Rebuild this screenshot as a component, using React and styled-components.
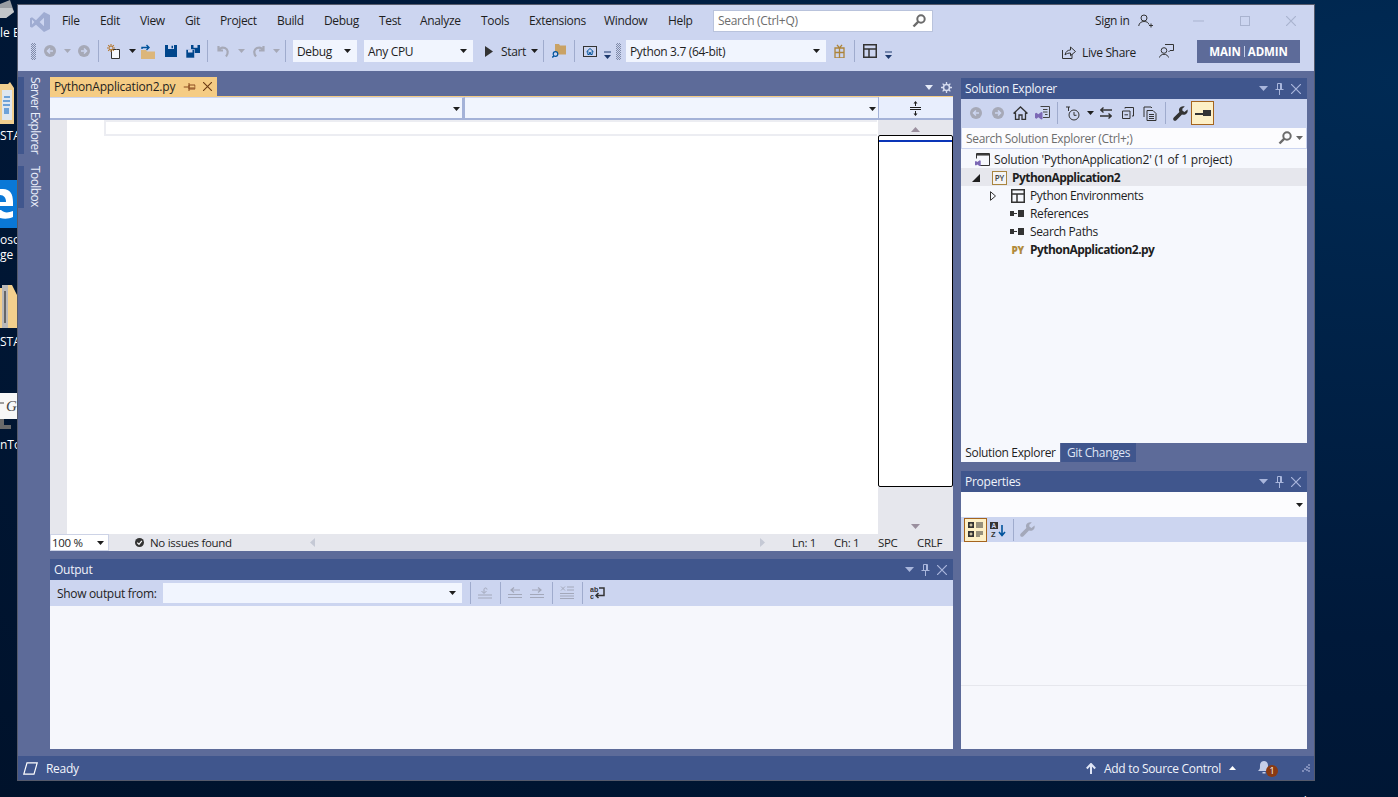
import styled, { createGlobalStyle } from "styled-components";

const GlobalStyle = createGlobalStyle`
  html, body {
    margin: 0;
    height: 100%;
    overflow: hidden;
  }
  body {
    font-family: "Open Sans", "Liberation Sans", sans-serif;
    font-size: 12px;
    color: #1e1e1e;
  }
  * {
    box-sizing: border-box;
  }
  svg {
    display: block;
    flex: none;
  }
`;

const Desktop = styled.div`
  position: relative;
  width: 1398px;
  height: 797px;
  overflow: hidden;
  background: radial-gradient(ellipse at 100% 10%, #002a54 0%, #00193a 55%, #00122b 100%);
`;

const IconStrip = styled.div`
  position: absolute;
  left: 0;
  top: 0;
  width: 17px;
  height: 460px;
  overflow: hidden;
`;

const DesktopLabel = styled.div`
  position: absolute;
  left: 0;
  top: ${(p) => p.$top}px;
  color: #fff;
  font-size: 12px;
  line-height: 14px;
  white-space: nowrap;
`;

const DesktopArt = styled.div`
  position: absolute;
  left: 0;
  top: ${(p) => p.$top}px;
`;

const Watermark = styled.div`
  position: absolute;
  left: 1278px;
  top: 793px;
  color: #fff;
  font-size: 12px;
  white-space: nowrap;
`;

const Window = styled.div`
  position: absolute;
  left: 17px;
  top: 4px;
  width: 1298px;
  height: 777px;
  border: 1px solid #555a6b;
  background: #5d6b99;
  display: flex;
  flex-direction: column;
`;

const Chrome = styled.header`
  height: 66px;
  background: #ccd5f0;
  flex: none;
`;

const MenuRow = styled.div`
  height: 33px;
  display: flex;
  align-items: center;
  padding: 0 0 2px 12px;
`;

const LogoSlot = styled.div`
  width: 32px;
  flex: none;
  padding-top: 2px;
`;

const MenuItem = styled.div`
  width: ${(p) => p.$w}px;
  flex: none;
  color: #1e1e1e;
  letter-spacing: -0.35px;
`;

const SearchBox = styled.div`
  width: 220px;
  height: 22px;
  flex: none;
  background: #fff;
  border: 1px solid #b9c3dc;
  display: flex;
  align-items: center;
  justify-content: space-between;
  padding: 0 6px 0 4px;
  color: #6d6d6d;
  letter-spacing: -0.3px;
`;

const SignIn = styled.div`
  margin-left: 162px;
  width: 80px;
  flex: none;
  display: flex;
  align-items: center;
  gap: 8px;
  letter-spacing: -0.35px;
`;

const WindowButton = styled.div`
  width: 46.5px;
  flex: none;
  display: flex;
  justify-content: center;
`;

const ToolRow = styled.div`
  height: 26px;
  display: flex;
  align-items: center;
  padding: 0 14px 0 11px;
`;

const Slot = styled.div`
  width: ${(p) => p.$w}px;
  height: 22px;
  flex: none;
  display: flex;
  align-items: center;
  justify-content: center;
`;

const Gripper = styled.div`
  width: 5px;
  height: 17px;
  background-image: conic-gradient(#7f8aa8 25%, transparent 0 50%, #7f8aa8 0 75%, transparent 0);
  background-size: 2px 2px;
`;

const Sep = styled.div`
  width: 1px;
  height: ${(p) => p.$h || 22}px;
  background: #9fabcd;
`;

const Combo = styled.div`
  width: ${(p) => p.$w}px;
  height: ${(p) => p.$h || 22}px;
  flex: none;
  background: ${(p) => p.$bg || "#f1f5fe"};
  margin-left: ${(p) => p.$ml || 0}px;
  display: flex;
  align-items: center;
  justify-content: space-between;
  padding: 0 6px 0 4px;
  letter-spacing: -0.35px;
`;

const StartButton = styled.div`
  width: 67px;
  flex: none;
  display: flex;
  align-items: center;
  padding-left: 12px;
  letter-spacing: -0.35px;
`;

const StartLabel = styled.span`
  margin: 0 5px 0 8px;
`;

const LiveShare = styled.div`
  margin-left: auto;
  flex: none;
  display: flex;
  align-items: center;
  gap: 6px;
  width: 97px;
  padding-top: 2px;
  letter-spacing: -0.35px;
`;

const Badge = styled.div`
  width: 103px;
  height: 23px;
  flex: none;
  margin-left: 23px;
  background: #5d6b99;
  color: #fff;
  font-weight: 700;
  font-size: 11.5px;
  display: flex;
  align-items: center;
  justify-content: center;
  gap: 3px;
  letter-spacing: -0.1px;
`;

const BadgeBar = styled.span`
  width: 1px;
  height: 11px;
  background: #c6cfe8;
`;

const Workspace = styled.main`
  flex: 1;
  min-height: 0;
  display: flex;
  padding: 0 7px 7px 0;
`;

const Rail = styled.nav`
  width: 32px;
  flex: none;
  padding-top: 6px;
  display: flex;
  flex-direction: column;
  align-items: flex-start;
  gap: 12px;
`;

const RailTab = styled.div`
  height: ${(p) => p.$h}px;
  border-left: 6px solid #40568d;
  padding-left: 4px;
  writing-mode: vertical-rl;
  color: #e9edf9;
  line-height: 14px;
  letter-spacing: -0.6px;
  white-space: nowrap;
`;

const CenterColumn = styled.div`
  width: 903px;
  flex: none;
  display: flex;
  flex-direction: column;
  padding-top: 6px;
  gap: 8px;
`;

const DocWell = styled.section`
  height: 474px;
  flex: none;
  display: flex;
  flex-direction: column;
`;

const TabRow = styled.div`
  height: 19px;
  flex: none;
  display: flex;
  align-items: center;
  justify-content: space-between;
  padding-right: 1px;
`;

const DocTab = styled.div`
  width: 167px;
  height: 19px;
  background: #f5cc84;
  display: flex;
  align-items: center;
  padding: 0 4px;
  letter-spacing: -0.2px;
  white-space: nowrap;
`;

const TabName = styled.span`
  width: 131px;
  flex: none;
`;

const TabActions = styled.div`
  display: flex;
  align-items: center;
  gap: 8px;
  padding-top: 1px;
`;

const NavBar = styled.div`
  height: 24px;
  flex: none;
  display: flex;
  border-top: 1px solid #f5cc84;
  border-bottom: 2px solid #a4b2d8;
  background: #f1f5fe;
`;

const NavCombo = styled.div`
  width: ${(p) => p.$w}px;
  flex: none;
  display: flex;
  align-items: center;
  justify-content: flex-end;
  padding: 2px 2px 0 0;
  border-top: 1px solid #ccd5f0;
  border-right: ${(p) => (p.$split ? "3px solid #a4b2d8" : "none")};
`;

const NavSplit = styled.div`
  flex: 1;
  background: #e8eefd;
  border-left: 1px solid #a4b2d8;
  display: flex;
  align-items: center;
  justify-content: center;
  padding: 1px 1px 0 0;
`;

const EditorRow = styled.div`
  flex: 1;
  min-height: 0;
  display: flex;
`;

const Gutter = styled.div`
  width: 17px;
  flex: none;
  background: #e6e7ed;
`;

const Margin = styled.div`
  width: 37px;
  flex: none;
  background: #fff;
`;

const CodeArea = styled.div`
  width: 774px;
  flex: none;
  background: #fff;
`;

const CurrentLine = styled.div`
  height: 16px;
  margin-right: 1px;
  border: 2px solid #ecedf2;
  border-right: none;
`;

const ScrollColumn = styled.div`
  flex: 1;
  background: #e6e7ed;
  display: flex;
  flex-direction: column;
  align-items: center;
  padding-top: 4px;
`;

const ScrollArrow = styled.div`
  height: 10px;
  flex: none;
  display: flex;
  align-items: center;
`;

const MapView = styled.div`
  width: 75px;
  height: 352px;
  flex: none;
  margin: 1px 0 34px;
  background: #fff;
  border: 1px solid #000;
  border-radius: 2px;
  padding-top: 4px;
`;

const MapCaret = styled.div`
  height: 2px;
  background: #0a35b8;
`;

const EditorFoot = styled.div`
  height: 17px;
  flex: none;
  background: #e6e7ed;
  display: flex;
  align-items: center;
  letter-spacing: -0.3px;
  font-size: 11.5px;
`;

const ZoomCombo = styled.div`
  width: 59px;
  height: 17px;
  flex: none;
  background: #fff;
  border: 1px solid #cdd3e6;
  display: flex;
  align-items: center;
  justify-content: space-between;
  padding: 0 4px 0 1px;
`;

const FootCell = styled.div`
  width: ${(p) => p.$w}px;
  flex: none;
  display: flex;
  align-items: center;
  gap: ${(p) => p.$gap || 0}px;
  padding-left: ${(p) => p.$pl || 0}px;
`;

const Panel = styled.section`
  display: flex;
  flex-direction: column;
  background: #f6f7fc;
  flex: ${(p) => (p.$h ? "none" : "1")};
  height: ${(p) => (p.$h ? `${p.$h}px` : "auto")};
  min-height: 0;
`;

const PanelTitle = styled.div`
  height: 21px;
  flex: none;
  background: #40568d;
  color: #fff;
  display: flex;
  align-items: center;
  justify-content: space-between;
  padding: 0 6px 0 4px;
  letter-spacing: -0.25px;
`;

const TitleName = styled.span`
  color: #f0f3fb;
`;

const PanelActions = styled.div`
  display: flex;
  align-items: center;
  gap: 7px;
`;

const PanelBar = styled.div`
  height: ${(p) => p.$h || 26}px;
  flex: none;
  background: #ccd5f0;
  display: flex;
  align-items: center;
  padding-left: ${(p) => p.$pl || 0}px;
`;

const OutputLabel = styled.span`
  width: 106px;
  flex: none;
  letter-spacing: -0.32px;
`;

const PanelBody = styled.div`
  flex: 1;
  min-height: 0;
  background: #f6f7fc;
`;

const RightColumn = styled.aside`
  width: 346px;
  margin-left: 8px;
  flex: none;
  display: flex;
  flex-direction: column;
  padding-top: 7px;
  gap: 9px;
`;

const ActiveButton = styled.div`
  width: ${(p) => p.$w || 23}px;
  height: 24px;
  flex: none;
  background: #fdf0c7;
  border: 1px solid #a5641e;
  display: flex;
  align-items: center;
  justify-content: center;
`;

const SearchRow = styled.div`
  height: 22px;
  flex: none;
  background: #ccd5f0;
  padding: 1px;
`;

const SearchInput = styled.div`
  height: 20px;
  background: #fcfcfe;
  display: flex;
  align-items: center;
  justify-content: space-between;
  padding: 0 3px 0 4px;
  color: #6d6d6d;
  letter-spacing: -0.33px;
`;

const SearchTools = styled.div`
  display: flex;
  align-items: center;
  gap: 4px;
`;

const Tree = styled.div`
  flex: 1;
  min-height: 0;
  background: #f6f8fd;
  padding-top: 1px;
`;

const TreeRow = styled.div`
  height: 18px;
  padding-top: 1px;
  display: flex;
  align-items: center;
  background: ${(p) => (p.$selected ? "#e6e7ed" : "transparent")};
  font-weight: ${(p) => (p.$bold ? 700 : 400)};
  letter-spacing: ${(p) => p.$track || (p.$bold ? "-0.55px" : "-0.37px")};
`;

const TreeIndent = styled.div`
  width: ${(p) => p.$w}px;
  flex: none;
  display: flex;
  align-items: center;
  justify-content: ${(p) => (p.$pr !== undefined ? "flex-end" : "center")};
  padding-right: ${(p) => p.$pr || 0}px;
`;

const PyBox = styled.span`
  width: 15px;
  height: 14px;
  border: 1px solid #a9853f;
  background: #f4f4f4;
  color: #444;
  font-size: 8px;
  font-weight: 600;
  line-height: 12px;
  text-align: center;
  letter-spacing: -0.2px;
`;

const PyMark = styled.span`
  color: #b18b3c;
  font-size: 10px;
  font-weight: 800;
  letter-spacing: -0.2px;
`;

const TabStrip = styled.div`
  height: 19px;
  flex: none;
  display: flex;
  background: #5d6b99;
`;

const BottomTab = styled.div`
  width: ${(p) => p.$w}px;
  margin-right: ${(p) => p.$mr || 0}px;
  flex: none;
  background: ${(p) => (p.$active ? "#f6f8fd" : "#40568d")};
  color: ${(p) => (p.$active ? "#1e1e1e" : "#dfe5f5")};
  display: flex;
  align-items: center;
  justify-content: center;
  letter-spacing: -0.35px;
  white-space: nowrap;
`;

const PropsSelect = styled.div`
  height: 25px;
  flex: none;
  background: #fcfcfe;
  display: flex;
  align-items: center;
  justify-content: flex-end;
  padding-right: 4px;
`;

const PropsGrid = styled.div`
  height: 144px;
  flex: none;
  border-bottom: 1px solid #e6e7ed;
`;

const StatusBar = styled.footer`
  height: 24px;
  flex: none;
  background: #40568d;
  color: #f2f4fb;
  display: flex;
  align-items: center;
  padding: 0 4px 0 5px;
  letter-spacing: -0.3px;
`;

const StatusText = styled.span`
  margin-left: 8px;
`;

const StatusRight = styled.div`
  margin-left: auto;
  display: flex;
  align-items: center;
`;

const SourceControl = styled.div`
  display: flex;
  align-items: center;
  width: 172px;
  gap: 8px;
`;

const Bell = styled.div`
  position: relative;
  width: 44px;
  height: 20px;
  padding-top: 2px;
`;

const BellCount = styled.span`
  position: absolute;
  left: 8px;
  top: 7px;
  width: 12px;
  height: 12px;
  border-radius: 50%;
  background: #8a3a12;
  color: #fff;
  font-size: 9px;
  line-height: 12px;
  text-align: center;
`;

const SvgText = styled.text`
  font-family: "Liberation Sans", sans-serif;
  font-weight: 700;
`;

const ThinSvgText = styled.text`
  font-family: "Liberation Serif", serif;
  font-style: italic;
`;

// icons
const Caret = ({ up, c = "#1e1e1e", w = 7 }) => (
  <svg width={w} height={Math.round((w * 4) / 7)} viewBox="0 0 7 4" preserveAspectRatio="none">
    <path d={up ? "M0 4L3.5 0L7 4z" : "M0 0L7 0L3.5 4z"} fill={c} />
  </svg>
);

const OverflowCaret = () => (
  <svg width={7} height={8} viewBox="0 0 7 8" style={{ marginTop: 8 }}>
    <path d="M0 1h7" stroke="#1e3a6e" strokeWidth="1" />
    <path d="M0 4h7L3.5 8z" fill="#1e3a6e" />
  </svg>
);

const VsLogo = () => (
  <svg width={20} height={20} viewBox="0 0 20 20">
    <path
      d="M14 0l6 3v14l-6 3-8-7.3-4 3-2-1V6.3l2-1 4 3zM14 5.8L9.6 10 14 14.200zM2 7.600v4.800L4.400 10z"
      fill="#9facd2"
      fillRule="evenodd"
    />
  </svg>
);

const Magnifier = ({ c = "#6b6b6b" }) => (
  <svg width={14} height={14} viewBox="0 0 14 14">
    <circle cx="9" cy="5" r="3.700" fill="none" stroke={c} strokeWidth="2" />
    <path d="M6.300 7.700L1.500 12.500" stroke={c} strokeWidth="2.400" />
  </svg>
);

const PersonPlus = () => (
  <svg width={15} height={14} viewBox="0 0 15 14">
    <circle cx="6" cy="4" r="3" fill="none" stroke="#333" />
    <path d="M0.700 12c.4-3 2.500-4.500 5.300-4.500s4.300 1 5 3M11 11.500h4M13 9.500v4" fill="none" stroke="#333" />
  </svg>
);

const MinIcon = () => (
  <svg width={11} height={2} viewBox="0 0 11 2">
    <path d="M0 1h11" stroke="#a9b3cf" />
  </svg>
);

const MaxIcon = () => (
  <svg width={10} height={10} viewBox="0 0 10 10">
    <rect x=".5" y=".5" width="9" height="9" fill="none" stroke="#a9b3cf" />
  </svg>
);

const CloseIcon = ({ c = "#a9b3cf", s = 10 }) => (
  <svg width={s} height={s} viewBox="0 0 10 10">
    <path d="M0 0l10 10M10 0L0 10" stroke={c} strokeWidth="1.200" />
  </svg>
);

const CircleArrow = ({ dir }) => (
  <svg width={12} height={12} viewBox="0 0 12 12">
    <circle cx="6" cy="6" r="6" fill="#a6a9b7" />
    <path
      d={dir === "back" ? "M9 6H4M6 3.500L3.500 6 6 8.500" : "M3 6h5M6 3.500L8.500 6 6 8.500"}
      fill="none"
      stroke="#ccd5f0"
      strokeWidth="1.500"
    />
  </svg>
);

const NewProject = () => (
  <svg width={14} height={15} viewBox="0 0 14 15">
    <path d="M4.500 5.500h5l3 0v9h-8z" fill="#f6f7fc" stroke="#333" />
    <path d="M4 0v8M0 4h8M1.200 1.200l5.600 5.600M6.800 1.200L1.200 6.800" stroke="#b5762a" strokeWidth="1.100" />
    <circle cx="4" cy="4" r="1.300" fill="#ccd5f0" />
  </svg>
);

const OpenFolder = () => (
  <svg width={14} height={15} viewBox="0 0 14 15">
    <path d="M0 6h5l1 1.500h8V15H0z" fill="#dcb67a" />
    <path d="M1 5V3.500h6M5.500 1l2.500 2.500-2.500 2.500" fill="none" stroke="#00539c" strokeWidth="1.400" />
  </svg>
);

const Floppy = ({ s = 12 }) => (
  <svg width={s} height={s} viewBox="0 0 12 12">
    <path d="M0 0h12v12H0z" fill="#00468c" />
    <path d="M3 0h6v4H3z" fill="#ccd5f0" />
    <path d="M6.500 .8h1.500v2.400H6.500z" fill="#00468c" />
  </svg>
);

const SaveAll = () => (
  <svg width={14} height={13} viewBox="0 0 14 13">
    <path d="M5 0h9v8H5z" fill="#00468c" />
    <path d="M7.500 0h4v2.800h-4z" fill="#ccd5f0" />
    <path d="M0 4.500h8.500v8.500H0z" fill="#00468c" stroke="#ccd5f0" strokeWidth=".6" />
    <path d="M2 4.500h4.500v3H2z" fill="#ccd5f0" />
  </svg>
);

const UndoIcon = ({ flip }) => (
  <svg width={13} height={13} viewBox="0 0 13 13" style={flip ? { transform: "scaleX(-1)" } : undefined}>
    <path d="M1.500 1v4.500H6M1.500 5.500C3 3 5.500 2 8 3c3 1.300 3.800 5 1 8.500" fill="none" stroke="#a6a9b7" strokeWidth="2.200" />
  </svg>
);

const FindFiles = () => (
  <svg width={14} height={14} viewBox="0 0 14 14">
    <path d="M3 0h4l1 1.500h6v9H3z" fill="#c9a265" />
    <circle cx="3.500" cy="10" r="2.300" fill="#ccd5f0" stroke="#00539c" strokeWidth="1.200" />
    <path d="M2 11.700L.3 13.500" stroke="#00539c" strokeWidth="1.400" />
  </svg>
);

const HomeBox = () => (
  <svg width={14} height={11} viewBox="0 0 14 11">
    <rect x=".5" y=".5" width="13" height="10" fill="none" stroke="#333" />
    <path d="M3.500 5.800L7 2.500l3.500 3.300M4.800 5v3.500h1.600V6.500h1.200v2h1.600V5" fill="none" stroke="#00539c" />
  </svg>
);

const Gift = () => (
  <svg width={11} height={14} viewBox="0 0 11 14">
    <path d="M1 4h9v10H1zM1 8.500h9M5.500 4v10M3 .8L5.500 4 8 .8" fill="none" stroke="#ad843a" strokeWidth="1.300" />
  </svg>
);

const LayoutIcon = ({ c = "#333" }) => (
  <svg width={14} height={14} viewBox="0 0 14 14">
    <path d="M.75.75h12.500v12.500H.75zM.75 5h12.500M6 5v8.250" fill="none" stroke={c} strokeWidth="1.500" />
  </svg>
);

const PlayIcon = () => (
  <svg width={8} height={11} viewBox="0 0 8 11">
    <path d="M0 0l8 5.500L0 11z" fill="#333" />
  </svg>
);

const ShareIcon = () => (
  <svg width={14} height={14} viewBox="0 0 14 14">
    <path d="M.5 5v8.500H10V9" fill="none" stroke="#333" />
    <path d="M3 10c.5-3.500 3-5 5.500-5V2l5 4.500-5 4.200V8C6.500 8 4.500 8.500 3 10z" fill="none" stroke="#333" />
  </svg>
);

const FeedbackIcon = () => (
  <svg width={15} height={14} viewBox="0 0 15 14">
    <circle cx="5" cy="6.500" r="2.800" fill="none" stroke="#333" />
    <path d="M.5 13.500c.4-2 2.200-3.200 4.500-3.200s4 1.200 4.500 3.200M6 .5h8.500v6H11l-1.500 1.500" fill="none" stroke="#333" />
  </svg>
);

const PinIcon = ({ c = "#a9b6dc", side }) => (
  <svg width={9} height={12} viewBox="0 0 9 12" style={side ? { transform: "rotate(90deg)" } : undefined}>
    <path d="M2.500.5h4v6h-4zM.5 6.500h8M4.500 7v5M5.500 1v5" fill="none" stroke={c} />
  </svg>
);

const Gear = () => (
  <svg width={11} height={11} viewBox="0 0 11 11">
    <circle cx="5.500" cy="5.500" r="3" fill="none" stroke="#d6dcf0" strokeWidth="1.600" />
    <path d="M5.500 0v2M5.500 9v2M0 5.500h2M9 5.500h2M1.600 1.600l1.400 1.400M8 8l1.400 1.400M9.400 1.600L8 3M3 8L1.600 9.400" stroke="#d6dcf0" strokeWidth="1.300" />
  </svg>
);

const SplitIcon = () => (
  <svg width={11} height={15} viewBox="0 0 11 15">
    <path d="M0 6.500h11M0 8.500h11" stroke="#1e1e1e" />
    <path d="M5.500 0L3.500 2.500h1.500V5h1V2.500h1.500zM5.500 15l-2-2.500h1.500V10h1v2.500h1.500z" fill="#1e1e1e" />
  </svg>
);

const CheckDot = () => (
  <svg width={9} height={9} viewBox="0 0 9 9">
    <circle cx="4.500" cy="4.500" r="4.500" fill="#333" />
    <path d="M2.200 4.600L4 6.300l2.800-3.400" fill="none" stroke="#fff" strokeWidth="1.200" />
  </svg>
);

const SideArrow = ({ right }) => (
  <svg width={5} height={9} viewBox="0 0 5 9">
    <path d={right ? "M0 0l5 4.500L0 9z" : "M5 0L0 4.500 5 9z"} fill="#c5c9d5" />
  </svg>
);

const VsDoc = () => (
  <svg width={15} height={14} viewBox="0 0 15 14">
    <path d="M5.500 .5h9v11H8M8 3.500h4.500M8 6h4.500M10 8.500h2.500" fill="none" stroke="#444" />
    <path d="M0 7.500l1.500-.7 1.800 1.400 3-2.200 1.200.6v6.300l-1.200.6-3-2.200-1.800 1.400-1.500-.7z" fill="#7b68b5" />
  </svg>
);

const HomeIcon = () => (
  <svg width={15} height={14} viewBox="0 0 15 14">
    <path d="M.5 7.500L7.500 1l7 6.500M2.500 6.500v7h3.500V9h3v4.500h3.500v-7" fill="none" stroke="#333" strokeWidth="1.300" />
  </svg>
);

const HistoryIcon = () => (
  <svg width={14} height={15} viewBox="0 0 14 15">
    <circle cx="8" cy="9" r="5" fill="none" stroke="#333" />
    <path d="M8 6v3.300h2.500M0 1h4M2.500 1v4" fill="none" stroke="#333" />
  </svg>
);

const SyncIcon = () => (
  <svg width={12} height={12} viewBox="0 0 12 12">
    <path d="M3.500 .5L.8 3l2.700 2.500M1 3h11M8.500 6.500L11.200 9 8.500 11.500M11 9H0" fill="none" stroke="#333" strokeWidth="1.400" />
  </svg>
);

const CollapseIcon = () => (
  <svg width={12} height={12} viewBox="0 0 12 12">
    <path d="M.5 4h7.500v7.500H.5zM3 1.500V.5h8.500V9h-1.500M2.500 7.800h3.500" fill="none" stroke="#333" />
  </svg>
);

const CopyDocs = () => (
  <svg width={14} height={15} viewBox="0 0 14 15">
    <path d="M1 11V1h7l1 1M4 4.500h6l3 3v7H4zM6 8.500h5M6 10.500h5M6 12.500h5" fill="none" stroke="#333" />
  </svg>
);

const Wrench = ({ c = "#333" }) => (
  <svg width={15} height={15} viewBox="0 0 15 15">
    <path d="M14.500 3.500L11.500 6 9.500 4.800 9.300 2.800 11.800.4C9.500-.3 7 .5 6.200 2.700c-.4 1.100-.3 2.200.2 3.200L.8 11.600c-.9.900-.8 2.100 0 2.800.8.700 1.800.6 2.600-.2l5.600-5.700c1 .4 2.200.5 3.300 0 1.900-.8 2.800-2.800 2.200-5z" fill={c} />
  </svg>
);

const AutoHide = () => (
  <svg width={16} height={6} viewBox="0 0 16 6">
    <path d="M0 3h8v2H0z" fill="#333" />
    <path d="M8 0h8v6H8z" fill="#333" />
  </svg>
);

const TreeOpen = () => (
  <svg width={8} height={8} viewBox="0 0 8 8">
    <path d="M8 0v8H0z" fill="#1e1e1e" />
  </svg>
);

const TreeClosed = () => (
  <svg width={6} height={10} viewBox="0 0 6 10">
    <path d="M.5.7l5 4.300-5 4.300z" fill="none" stroke="#333" />
  </svg>
);

const SolutionIcon = () => (
  <svg width={15} height={13} viewBox="0 0 15 13">
    <path d="M5 12.500h9.500V.5H1.500v5" fill="none" stroke="#333" />
    <path d="M1.500 1.800h13" stroke="#333" strokeWidth="1.500" />
    <path d="M0 8.500l1-.5 1.300 1 2.400-1.800 1 .5v5l-1 .5-2.400-1.800-1.300 1-1-.5z" fill="#7b68b5" />
  </svg>
);

const RefIcon = () => (
  <svg width={14} height={7} viewBox="0 0 14 7">
    <path d="M0 1h4v5H0z" fill="#333" />
    <path d="M8 0h6v7H8z" fill="#333" />
    <path d="M4 3.500h3" stroke="#333" />
  </svg>
);

const CategoryIcon = () => (
  <svg width={15} height={15} viewBox="0 0 15 15">
    <path d="M0 0h6v6H0zM0 9h6v6H0z" fill="#333" />
    <path d="M1.500 3h3M3 1.500v3M1.500 12h3M3 10.500v3" stroke="#fdf0c7" />
    <path d="M8 1h7M8 3h7M8 5h7M8 10h7M8 12h7M8 14h4" stroke="#333" />
  </svg>
);

const SortIcon = () => (
  <svg width={16} height={15} viewBox="0 0 16 15">
    <path d="M0 0h8v7H0z" fill="#333" />
    <SvgText x="1.500" y="6" fontSize="6.500" fill="#ccd5f0">A</SvgText>
    <SvgText x="1" y="14.500" fontSize="7.500" fill="#333">Z</SvgText>
    <path d="M12 3v10M9 10l3 3.500 3-3.500" fill="none" stroke="#00539c" strokeWidth="1.600" />
  </svg>
);

const LinesIcon = ({ type }) => {
  const c = "#a3a8ba";
  if (type === "comment") {
    return (
      <svg width={14} height={14} viewBox="0 0 14 14">
        <path d="M0 9h14M0 12h14M6 7V3.500C6 1.500 9 1.500 9 3.500M3.500 5L6 7.500 8.500 5" fill="none" stroke={c} />
      </svg>
    );
  }
  if (type === "left" || type === "right") {
    return (
      <svg width={14} height={12} viewBox="0 0 14 12">
        <path d="M0 7.500h14M0 10.500h14" stroke={c} />
        <path d={type === "left" ? "M12 3H3M6 .5L3 3l3 2.500" : "M2 3h9M8 .5L11 3 8 5.500"} fill="none" stroke={c} strokeWidth="1.200" />
      </svg>
    );
  }
  return (
    <svg width={14} height={14} viewBox="0 0 14 14">
      <path d="M0 7.500h14M0 10h14M0 12.500h14M7 1h7M7 4h7M1 .5l4 4M5 .5l-4 4" fill="none" stroke={c} />
    </svg>
  );
};

const WrapIcon = () => (
  <svg width={15} height={14} viewBox="0 0 15 14">
    <SvgText x="0" y="6" fontSize="7" fill="#333">ab</SvgText>
    <SvgText x="0" y="13" fontSize="7" fill="#333">c</SvgText>
    <path d="M9 2h5v7.500H6M8.500 7L6 9.500 8.500 12" fill="none" stroke="#333" strokeWidth="1.500" />
  </svg>
);

const Rhomb = () => (
  <svg width={15} height={13} viewBox="0 0 15 13">
    <path d="M4 .8h10.200L11 12.200H.8z" fill="none" stroke="#fff" strokeWidth="1.200" />
  </svg>
);

const UpArrow = () => (
  <svg width={10} height={11} viewBox="0 0 10 11">
    <path d="M5 11V1.500M.8 5.500L5 1l4.200 4.500" fill="none" stroke="#dfe5f5" strokeWidth="2" />
  </svg>
);

const BellIcon = () => (
  <svg width={12} height={14} viewBox="0 0 12 14">
    <path d="M0 11c2-1.500 2-3 2-5.500C2 2.500 3.800 1 6 1s4 1.500 4 4.500c0 2.500 0 4 2 5.500zM4.500 12h3v1.500h-3z" fill="#c5cee8" />
  </svg>
);

const ResizeGrip = () => (
  <svg width={8} height={8} viewBox="0 0 8 8">
    <path d="M6 0h2v2H6zM4 2h2v2H4zM6 3h2v2H6zM2 4h2v2H2zM4 5h2v2H4zM6 6h2v2H6zM0 6h2v2H0z" fill="#7f8dba" />
  </svg>
);

const BinArt = () => (
  <svg width={14} height={18} viewBox="0 0 14 18">
    <path d="M0 4l10-4 4 12-8 6H0z" fill="#9a9ea3" />
    <path d="M0 8l12 0 2 4-8 6H0z" fill="#c4c7ca" />
  </svg>
);

const FolderArt = () => (
  <svg width={14} height={42} viewBox="0 0 14 42">
    <path d="M0 2h8l2-2 4 6v36H0z" fill="#f1cf8f" />
    <path d="M2 8h10v30H2z" fill="#dfe7ef" />
    <path d="M4 14h6v2H4zM3 18h7v2H3zM3 22h7v2H3zM4 26h5v6H4z" fill="#6ea2d8" />
  </svg>
);

const EdgeArt = () => (
  <svg width={17} height={48} viewBox="0 0 17 48">
    <path d="M0 0h17v48H0z" fill="#0a78d7" />
    <path d="M0 9h3c7 0 10 5 10 13v4H0v-4h6c0-4-2-7-6-7zM0 30h1c3 3 7 3 12 1v6c-4 2-9 2-13 1z" fill="#fff" />
  </svg>
);

const ZipArt = () => (
  <svg width={17} height={43} viewBox="0 0 17 43">
    <path d="M0 3h2v40H0zM8 0h4l5 10v33H8z" fill="#f3d08d" />
    <path d="M2 0h6v43H2z" fill="#b9b9b9" />
    <path d="M4 6h2v32H4z" fill="#666" />
  </svg>
);

const ToolArt = () => (
  <svg width={17} height={38} viewBox="0 0 17 38">
    <path d="M0 0h17v26H0z" fill="#f7f7f7" />
    <ThinSvgText x="6" y="18" fontSize="15" fill="#444">G</ThinSvgText>
    <path d="M0 10h4" stroke="#444" />
    <path d="M0 26h4v6H0zM0 32h11v4H0z" fill="#6a6a6a" />
  </svg>
);

const menuItems = [
  ["File", 38],
  ["Edit", 40],
  ["View", 45],
  ["Git", 35],
  ["Project", 57],
  ["Build", 47],
  ["Debug", 55],
  ["Test", 41],
  ["Analyze", 61],
  ["Tools", 48],
  ["Extensions", 75],
  ["Window", 64],
  ["Help", 45],
];

const PanelButtons = () => (
  <PanelActions>
    <Caret c="#a9b6dc" w={9} />
    <PinIcon />
    <CloseIcon c="#a9b6dc" />
  </PanelActions>
);

const App = () => {
  return (
    <Desktop>
      <GlobalStyle />
      <IconStrip>
        <DesktopArt $top={0}><BinArt /></DesktopArt>
        <DesktopLabel $top={26}>le B</DesktopLabel>
        <DesktopArt $top={82}><FolderArt /></DesktopArt>
        <DesktopLabel $top={129}>STA</DesktopLabel>
        <DesktopArt $top={180}><EdgeArt /></DesktopArt>
        <DesktopLabel $top={233}>osof</DesktopLabel>
        <DesktopLabel $top={248}>ge</DesktopLabel>
        <DesktopArt $top={285}><ZipArt /></DesktopArt>
        <DesktopLabel $top={335}>STA</DesktopLabel>
        <DesktopArt $top={393}><ToolArt /></DesktopArt>
        <DesktopLabel $top={438}>nTo</DesktopLabel>
      </IconStrip>

      <Window>
        <Chrome>
          <MenuRow>
            <LogoSlot><VsLogo /></LogoSlot>
            {menuItems.map(([name, w]) => (
              <MenuItem key={name} $w={w}>{name}</MenuItem>
            ))}
            <SearchBox>
              Search (Ctrl+Q)
              <Magnifier />
            </SearchBox>
            <SignIn>
              Sign in
              <PersonPlus />
            </SignIn>
            <WindowButton><MinIcon /></WindowButton>
            <WindowButton><MaxIcon /></WindowButton>
            <WindowButton><CloseIcon /></WindowButton>
          </MenuRow>
          <ToolRow>
            <Slot $w={8}><Gripper /></Slot>
            <Slot $w={26}><CircleArrow dir="back" /></Slot>
            <Slot $w={8}><Caret c="#a6a9b7" /></Slot>
            <Slot $w={26}><CircleArrow dir="forward" /></Slot>
            <Slot $w={3}><Sep /></Slot>
            <Slot $w={28}><NewProject /></Slot>
            <Slot $w={8}><Caret /></Slot>
            <Slot $w={24}><OpenFolder /></Slot>
            <Slot $w={22}><Floppy /></Slot>
            <Slot $w={22}><SaveAll /></Slot>
            <Slot $w={6}><Sep /></Slot>
            <Slot $w={26}><UndoIcon /></Slot>
            <Slot $w={10}><Caret c="#a6a9b7" /></Slot>
            <Slot $w={24}><UndoIcon flip /></Slot>
            <Slot $w={12}><Caret c="#a6a9b7" /></Slot>
            <Slot $w={7}><Sep /></Slot>
            <Combo $w={64} $ml={4}>Debug<Caret /></Combo>
            <Combo $w={109} $ml={7}>Any CPU<Caret /></Combo>
            <StartButton>
              <PlayIcon />
              <StartLabel>Start</StartLabel>
              <Caret />
            </StartButton>
            <Slot $w={7}><Sep /></Slot>
            <Slot $w={24}><FindFiles /></Slot>
            <Slot $w={7}><Sep /></Slot>
            <Slot $w={24}><HomeBox /></Slot>
            <Slot $w={10}><OverflowCaret /></Slot>
            <Slot $w={12}><Gripper /></Slot>
            <Combo $w={200} $ml={2}>Python 3.7 (64-bit)<Caret /></Combo>
            <Slot $w={26}><Gift /></Slot>
            <Slot $w={5}><Sep /></Slot>
            <Slot $w={26}><LayoutIcon /></Slot>
            <Slot $w={10}><OverflowCaret /></Slot>
            <LiveShare>
              <ShareIcon />
              Live Share
            </LiveShare>
            <FeedbackIcon />
            <Badge>MAIN<BadgeBar />ADMIN</Badge>
          </ToolRow>
        </Chrome>

        <Workspace>
          <Rail>
            <RailTab $h={77}>Server Explorer</RailTab>
            <RailTab $h={42}>Toolbox</RailTab>
          </Rail>

          <CenterColumn>
            <DocWell>
              <TabRow>
                <DocTab>
                  <TabName>PythonApplication2.py</TabName>
                  <PinIcon c="#8a4a1e" side />
                  <Slot $w={9} />
                  <CloseIcon c="#6b3a14" s={9} />
                </DocTab>
                <TabActions>
                  <Caret c="#e6ebf8" w={8} />
                  <Gear />
                </TabActions>
              </TabRow>
              <NavBar>
                <NavCombo $w={415} $split><Caret /></NavCombo>
                <NavCombo $w={413}><Caret /></NavCombo>
                <NavSplit><SplitIcon /></NavSplit>
              </NavBar>
              <EditorRow>
                <Gutter />
                <Margin />
                <CodeArea><CurrentLine /></CodeArea>
                <ScrollColumn>
                  <ScrollArrow><Caret up c="#9a8f9e" w={9} /></ScrollArrow>
                  <MapView><MapCaret /></MapView>
                  <ScrollArrow><Caret c="#9a8f9e" w={9} /></ScrollArrow>
                </ScrollColumn>
              </EditorRow>
              <EditorFoot>
                <ZoomCombo>100 %<Caret /></ZoomCombo>
                <FootCell $w={201} $pl={26} $gap={6}><CheckDot />No issues found</FootCell>
                <FootCell $w={450}><SideArrow /></FootCell>
                <FootCell $w={30}><SideArrow right /></FootCell>
                <FootCell $w={43} $pl={2}>Ln: 1</FootCell>
                <FootCell $w={44} $pl={1}>Ch: 1</FootCell>
                <FootCell $w={39} $pl={1}>SPC</FootCell>
                <FootCell $w={37} $pl={1}>CRLF</FootCell>
              </EditorFoot>
            </DocWell>

            <Panel>
              <PanelTitle>
                <TitleName>Output</TitleName>
                <PanelButtons />
              </PanelTitle>
              <PanelBar $pl={7}>
                <OutputLabel>Show output from:</OutputLabel>
                <Combo $w={299} $h={20}><span /><Caret /></Combo>
                <Slot $w={16}><Sep /></Slot>
                <Slot $w={14}><LinesIcon type="comment" /></Slot>
                <Slot $w={16}><Sep /></Slot>
                <Slot $w={14}><LinesIcon type="left" /></Slot>
                <Slot $w={8} />
                <Slot $w={14}><LinesIcon type="right" /></Slot>
                <Slot $w={16}><Sep /></Slot>
                <Slot $w={14}><LinesIcon type="clear" /></Slot>
                <Slot $w={16}><Sep /></Slot>
                <Slot $w={14}><WrapIcon /></Slot>
              </PanelBar>
              <PanelBody />
            </Panel>
          </CenterColumn>

          <RightColumn>
            <Panel $h={384}>
              <PanelTitle>
                <TitleName>Solution Explorer</TitleName>
                <PanelButtons />
              </PanelTitle>
              <PanelBar $h={28} $pl={4}>
                <Slot $w={22}><CircleArrow dir="back" /></Slot>
                <Slot $w={22}><CircleArrow dir="forward" /></Slot>
                <Slot $w={22}><HomeIcon /></Slot>
                <Slot $w={22}><VsDoc /></Slot>
                <Slot $w={8}><Sep /></Slot>
                <Slot $w={24}><HistoryIcon /></Slot>
                <Slot $w={10}><Caret /></Slot>
                <Slot $w={22}><SyncIcon /></Slot>
                <Slot $w={22}><CollapseIcon /></Slot>
                <Slot $w={22}><CopyDocs /></Slot>
                <Slot $w={8}><Sep /></Slot>
                <Slot $w={22}><Wrench /></Slot>
                <ActiveButton><AutoHide /></ActiveButton>
              </PanelBar>
              <SearchRow>
                <SearchInput>
                  Search Solution Explorer (Ctrl+;)
                  <SearchTools>
                    <Magnifier />
                    <Caret c="#666" />
                  </SearchTools>
                </SearchInput>
              </SearchRow>
              <Tree>
                <TreeRow $track="-0.2px">
                  <TreeIndent $w={33} $pr={4}><SolutionIcon /></TreeIndent>
                  Solution 'PythonApplication2' (1 of 1 project)
                </TreeRow>
                <TreeRow $selected $bold>
                  <TreeIndent $w={30}><TreeOpen /></TreeIndent>
                  <TreeIndent $w={21} $pr={5}><PyBox>PY</PyBox></TreeIndent>
                  PythonApplication2
                </TreeRow>
                <TreeRow>
                  <TreeIndent $w={35} $pr={0}><TreeClosed /></TreeIndent>
                  <TreeIndent $w={34} $pr={5}><LayoutIcon /></TreeIndent>
                  Python Environments
                </TreeRow>
                <TreeRow>
                  <TreeIndent $w={69} $pr={6}><RefIcon /></TreeIndent>
                  References
                </TreeRow>
                <TreeRow>
                  <TreeIndent $w={69} $pr={6}><RefIcon /></TreeIndent>
                  Search Paths
                </TreeRow>
                <TreeRow $bold>
                  <TreeIndent $w={69} $pr={6}><PyMark>PY</PyMark></TreeIndent>
                  PythonApplication2.py
                </TreeRow>
              </Tree>
              <TabStrip>
                <BottomTab $w={99} $mr={1} $active>Solution Explorer</BottomTab>
                <BottomTab $w={75}>Git Changes</BottomTab>
              </TabStrip>
            </Panel>

            <Panel>
              <PanelTitle>
                <TitleName>Properties</TitleName>
                <PanelButtons />
              </PanelTitle>
              <PropsSelect><Caret /></PropsSelect>
              <PanelBar $h={25} $pl={3}>
                <ActiveButton><CategoryIcon /></ActiveButton>
                <Slot $w={22}><SortIcon /></Slot>
                <Slot $w={8}><Sep /></Slot>
                <Slot $w={20}><Wrench c="#a3a8ba" /></Slot>
              </PanelBar>
              <PropsGrid />
              <PanelBody />
            </Panel>
          </RightColumn>
        </Workspace>

        <StatusBar>
          <Rhomb />
          <StatusText>Ready</StatusText>
          <StatusRight>
            <SourceControl>
              <UpArrow />
              Add to Source Control
              <Caret up c="#fff" />
            </SourceControl>
            <Bell>
              <BellIcon />
              <BellCount>1</BellCount>
            </Bell>
            <ResizeGrip />
          </StatusRight>
        </StatusBar>
      </Window>

      <Watermark>Windows 10 Pro</Watermark>
    </Desktop>
  );
};

export default App;
